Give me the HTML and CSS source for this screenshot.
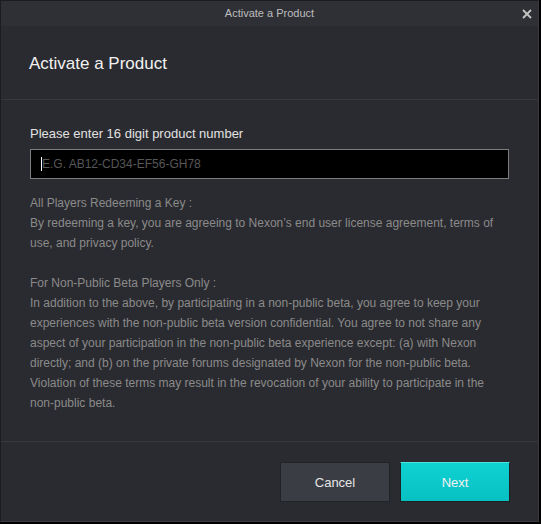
FILE: index.html
```html
<!DOCTYPE html>
<html>
<head>
<meta charset="utf-8">
<link rel="stylesheet" href="styles.css">
</head>
<body>
<div class="window">
  <div class="titlebar">
    <span class="titlebar-text">Activate a Product</span>
    <svg class="close" width="10" height="10" viewBox="0 0 10 10"><path d="M1 1 L9 9 M9 1 L1 9" stroke="#c4c4c4" stroke-width="1.8" fill="none"/></svg>
  </div>
  <div class="header">
    <h1 class="heading">Activate a Product</h1>
  </div>
  <div class="content">
    <div class="label">Please enter 16 digit product number</div>
    <div class="field">
      <span class="caret"></span>
      <span class="placeholder">E.G. AB12-CD34-EF56-GH78</span>
    </div>
    <div class="terms">
      <p>All Players Redeeming a Key :<br>By redeeming a key, you are agreeing to Nexon’s end user license agreement, terms of use, and privacy policy.</p>
      <p>For Non-Public Beta Players Only :<br>In addition to the above, by participating in a non-public beta, you agree to keep your experiences with the non-public beta version confidential. You agree to not share any aspect of your participation in the non-public beta experience except: (a) with Nexon directly; and (b) on the private forums designated by Nexon for the non-public beta. Violation of these terms may result in the revocation of your ability to participate in the non-public beta.</p>
    </div>
  </div>
  <div class="footer">
    <button class="btn btn-cancel">Cancel</button>
    <button class="btn btn-next">Next</button>
  </div>
</div>
</body>
</html>
```

FILE: styles.css
```css
html, body {
  margin: 0;
  padding: 0;
  background: #000;
  font-family: "Liberation Sans", Arial, sans-serif;
}
.window {
  width: 537px;
  height: 520px;
  background: #2a2b30;
  border: 1px solid #1b1c20;
  border-right-color: #3a3b40;
  border-bottom-color: #3a3b40;
  display: flex;
  flex-direction: column;
  box-sizing: content-box;
}
.titlebar {
  height: 25px;
  background: #2f3036;
  border-bottom: 1px solid #2a2b2f;
  position: relative;
  display: flex;
  align-items: center;
  justify-content: center;
}
.titlebar-text {
  font-size: 11px;
  color: #bdbdbd;
  margin-top: -1px;
}
.close {
  position: absolute;
  right: 6px;
  top: 8px;
}
.header {
  height: 72px;
  border-bottom: 1px solid #37383e;
  padding-left: 28px;
  display: flex;
  align-items: flex-start;
}
.heading {
  margin: 0;
  margin-top: 27px;
  font-size: 17px;
  font-weight: normal;
  color: #f2f2f2;
  line-height: 20px;
}
.content {
  padding: 25px 29px 0 29px;
  height: 316px;
  border-bottom: 1px solid #37383e;
}
.label {
  font-size: 13px;
  color: #e2e2e2;
  line-height: 18px;
}
.field {
  margin-top: 6px;
  height: 28px;
  border: 1px solid #7d7d7d;
  background: #000;
  position: relative;
  display: flex;
  align-items: center;
  padding-left: 11px;
}
.caret {
  position: absolute;
  left: 10px;
  top: 7px;
  width: 1px;
  height: 14px;
  background: #fff;
}
.placeholder {
  font-size: 12px;
  color: #575757;
}
.terms {
  margin-top: 14px;
  font-size: 12px;
  line-height: 20px;
  color: #8a8a8a;
}
.terms p {
  margin: 0 0 20px 0;
}
.footer {
  display: flex;
  justify-content: flex-end;
  gap: 10px;
  padding: 20px 28px 0 0;
}
.btn {
  width: 110px;
  height: 40px;
  font-family: "Liberation Sans", Arial, sans-serif;
  font-size: 13px;
  cursor: pointer;
  padding: 0;
}
.btn-cancel {
  background: #3b3d45;
  border: 1px solid #222327;
  color: #e6e6e6;
}
.btn-next {
  background: linear-gradient(#0ed2d2, #08c0c2);
  border: 1px solid #1e2024;
  border-top: 1px solid #4fe0e0;
  color: #f2f2f2;
}
```
